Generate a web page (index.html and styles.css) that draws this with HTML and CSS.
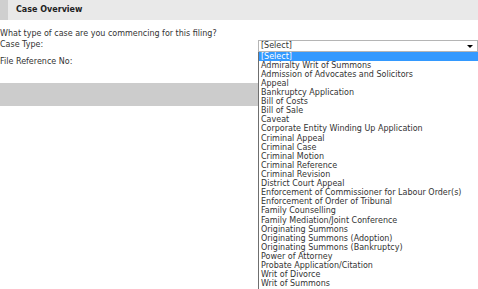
FILE: index.html
```html
<!DOCTYPE html>
<html>
<head>
    <link rel="stylesheet" href="styles.css">
</head>
<body>
    <div class="panel">
        <div class="panel-title">Case Overview</div>
        <div class="panel-body">
            <p class="question">What type of case are you commencing for this filing?</p>
            <div class="row">
                <label>Case Type:</label>
                <div class="dropdown">
                    <div class="select-box">
                        <span>[Select]</span>
                        <span class="arrow"></span>
                    </div>
                    <ul class="options">
                        <li class="selected">[Select]</li>
                        <li>Admiralty Writ of Summons</li>
                        <li>Admission of Advocates and Solicitors</li>
                        <li>Appeal</li>
                        <li>Bankruptcy Application</li>
                        <li>Bill of Costs</li>
                        <li>Bill of Sale</li>
                        <li>Caveat</li>
                        <li>Corporate Entity Winding Up Application</li>
                        <li>Criminal Appeal</li>
                        <li>Criminal Case</li>
                        <li>Criminal Motion</li>
                        <li>Criminal Reference</li>
                        <li>Criminal Revision</li>
                        <li>District Court Appeal</li>
                        <li>Enforcement of Commissioner for Labour Order(s)</li>
                        <li>Enforcement of Order of Tribunal</li>
                        <li>Family Counselling</li>
                        <li>Family Mediation/Joint Conference</li>
                        <li>Originating Summons</li>
                        <li>Originating Summons (Adoption)</li>
                        <li>Originating Summons (Bankruptcy)</li>
                        <li>Power of Attorney</li>
                        <li>Probate Application/Citation</li>
                        <li>Writ of Divorce</li>
                        <li>Writ of Summons</li>
                    </ul>
                </div>
            </div>
            <div class="row">
                <label>File Reference No:</label>
                <div class="text-field"></div>
            </div>
        </div>
        <div class="panel-footer"></div>
    </div>
</body>
</html>
```

FILE: styles.css
```css
html, body {
    height: 100%;
}
body {
    font-family: "DejaVu Sans", Verdana, sans-serif;
    font-size: 8px;
    color: #333;
    background-color: #fff;
    margin: 0;
    padding: 0;
}
.panel {
    min-height: 289px;
}
.panel-title {
    height: 20px;
    line-height: 20px;
    background-color: #e9e9e9;
    border-left: 8px solid #cfcfcf;
    padding-left: 8px;
    font-weight: bold;
    color: #222;
}
.panel-body {
    padding-top: 9px;
}
.question {
    margin: 0 0 1px;
    line-height: 10px;
}
.row {
    display: grid;
    grid-template-columns: 258px 1fr;
    align-items: start;
    margin-bottom: 5px;
}
.row label {
    line-height: 10px;
}
.dropdown {
    position: relative;
}
.select-box {
    height: 10px;
    border: 1px solid #b5b5b5;
    display: flex;
    justify-content: space-between;
    align-items: center;
    padding: 0 4px 0 2px;
    line-height: 10px;
}
.arrow {
    width: 0;
    height: 0;
    border-left: 3px solid transparent;
    border-right: 3px solid transparent;
    border-top: 3px solid #000;
}
.options {
    position: absolute;
    top: 12px;
    left: 0;
    right: 0;
    height: 237px;
    margin: 0;
    padding: 0;
    list-style: none;
    display: flex;
    flex-direction: column;
    background-color: #fff;
    border-left: 1px solid #6f6f6f;
    z-index: 2;
}
.options li {
    flex: 1 1 0;
    min-height: 0;
    display: flex;
    align-items: center;
    padding-left: 2px;
    line-height: 8px;
    white-space: nowrap;
}
.options li.selected {
    background-color: #3399ff;
    color: #fff;
}
.text-field {
    height: 12px;
}
.panel-footer {
    height: 23px;
    margin-top: 14px;
    background-color: #cccccc;
}
```
